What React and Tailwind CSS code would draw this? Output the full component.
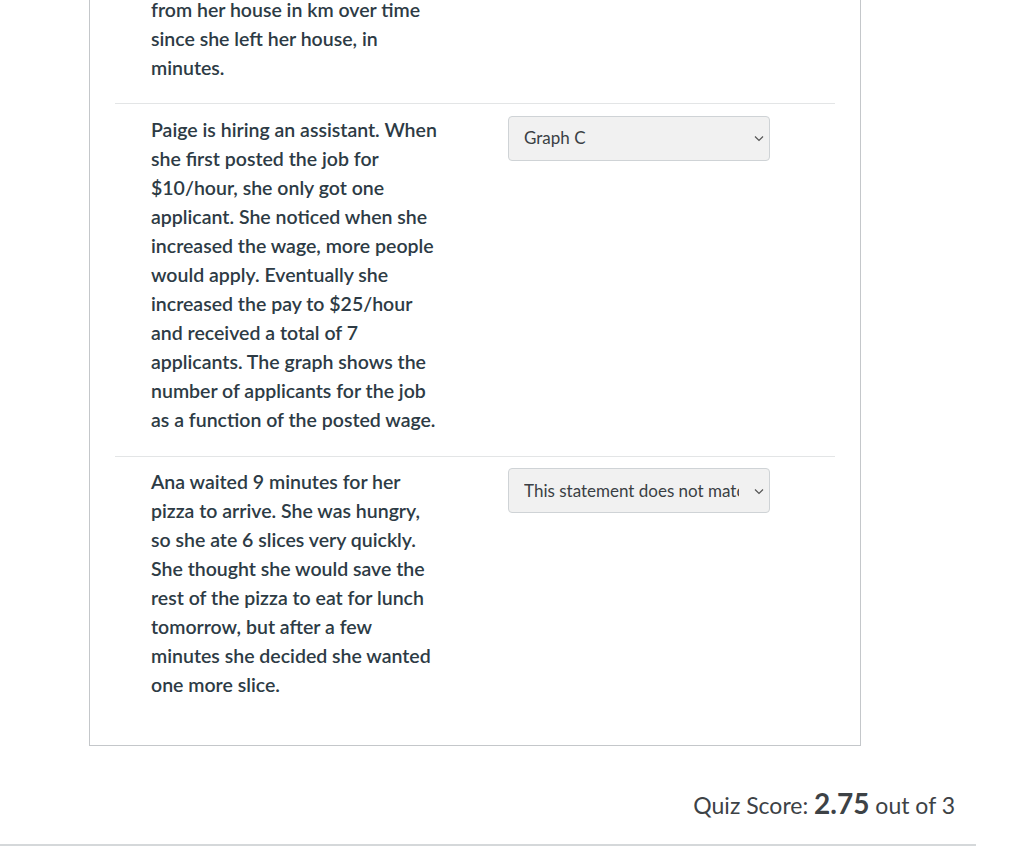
import React from 'react';

const rows = [
    {
        text: 'from her house in km over time since she left her house, in minutes.',
        answer: null,
    },
    {
        text: 'Paige is hiring an assistant. When she first posted the job for $10/hour, she only got one applicant. She noticed when she increased the wage, more people would apply. Eventually she increased the pay to $25/hour and received a total of 7 applicants. The graph shows the number of applicants for the job as a function of the posted wage.',
        answer: 'Graph C',
    },
    {
        text: 'Ana waited 9 minutes for her pizza to arrive. She was hungry, so she ate 6 slices very quickly. She thought she would save the rest of the pizza to eat for lunch tomorrow, but after a few minutes she decided she wanted one more slice.',
        answer: 'This statement does not match',
    },
];

function AnswerSelect({ value }) {
    return (
        <div className="mt-[1px] ml-[36px] w-[262px] h-[45px] bg-[#f1f1f1] border border-[#cfd3d6] rounded-[4px] flex items-center pl-[15px] pr-[3px]">
            <span className="flex-1 overflow-hidden whitespace-nowrap text-[17px] text-[#3a3f44]">{value}</span>
            <svg width="12" height="12" viewBox="0 0 12 12" className="ml-[14px] mr-[1px] shrink-0">
                <path d="M2 4.5 L6 8.5 L10 4.5" fill="none" stroke="#555" strokeWidth="1.2" />
            </svg>
        </div>
    );
}

export default function App() {
    return (
        <div className="bg-white min-h-screen font-['Lato','Liberation_Sans',sans-serif] text-[#2d3b45]">
            <div className="w-[976px] border-b-2 border-[#d5d8da] pb-[20px]">
                {/* question box */}
                <div className="ml-[89px] w-[772px] -mt-[5px] border border-t-0 border-[#c4c7ca] pb-[24px]">
                    {rows.map((row, i) => (
                        <div
                            key={i}
                            className={`mx-[25px] flex ${i === 0 ? 'pb-[21px]' : 'pt-[10.5px] pb-[22px] border-t border-[#e3e5e6]'}`}
                        >
                            <div className="w-[357px] pl-[36px] pr-[31px] text-[19.5px] leading-[29px] font-semibold">
                                {row.text}
                            </div>
                            {row.answer && <AnswerSelect value={row.answer} />}
                        </div>
                    ))}
                </div>

                {/* score */}
                <div className="mt-[36px] flex justify-end pr-[21px] items-baseline text-[23px] text-[#3d4246]">
                    <span>Quiz Score:&nbsp;</span>
                    <span className="text-[28px] font-bold">2.75</span>
                    <span>&nbsp;out of 3</span>
                </div>
            </div>
        </div>
    );
}
